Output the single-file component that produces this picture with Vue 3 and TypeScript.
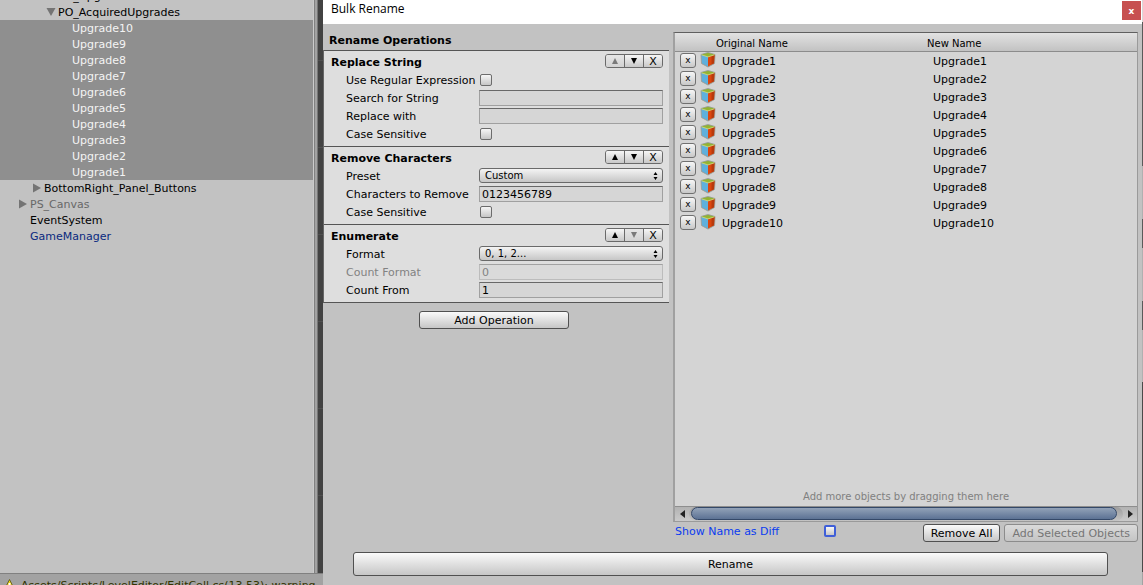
<script setup lang="ts">
import { reactive, ref } from 'vue'

interface TreeNode {
  name: string
  depth: number
  arrow?: 'open' | 'closed'
  tone?: 'selected' | 'muted' | 'prefab'
}

interface Field {
  id: string
  label: string
  kind: 'check' | 'text' | 'select'
  value?: string
  disabled?: boolean
}

interface Operation {
  title: string
  fields: Field[]
}

const count = 10

const tree: TreeNode[] = [
  { name: 'PO_UpgradesName', depth: 3 },
  { name: 'PO_AcquiredUpgrades', depth: 3, arrow: 'open' },
  ...Array.from({ length: count }, (_, i): TreeNode => ({
    name: `Upgrade${count - i}`,
    depth: 4,
    tone: 'selected',
  })),
  { name: 'BottomRight_Panel_Buttons', depth: 2, arrow: 'closed' },
  { name: 'PS_Canvas', depth: 1, arrow: 'closed', tone: 'muted' },
  { name: 'EventSystem', depth: 1 },
  { name: 'GameManager', depth: 1, tone: 'prefab' },
]

const operations = reactive<Operation[]>([
  {
    title: 'Replace String',
    fields: [
      { id: 'regex', label: 'Use Regular Expression', kind: 'check' },
      { id: 'search', label: 'Search for String', kind: 'text', value: '' },
      { id: 'replace', label: 'Replace with', kind: 'text', value: '' },
      { id: 'replace-case', label: 'Case Sensitive', kind: 'check' },
    ],
  },
  {
    title: 'Remove Characters',
    fields: [
      { id: 'preset', label: 'Preset', kind: 'select', value: 'Custom' },
      { id: 'characters', label: 'Characters to Remove', kind: 'text', value: '0123456789' },
      { id: 'remove-case', label: 'Case Sensitive', kind: 'check' },
    ],
  },
  {
    title: 'Enumerate',
    fields: [
      { id: 'format', label: 'Format', kind: 'select', value: '0, 1, 2...' },
      { id: 'count-format', label: 'Count Format', kind: 'text', value: '0', disabled: true },
      { id: 'count-from', label: 'Count From', kind: 'text', value: '1' },
    ],
  },
])

const objects = ref<string[]>(Array.from({ length: count }, (_, i) => `Upgrade${i + 1}`))

function move(index: number, by: number) {
  const [op] = operations.splice(index, 1)
  operations.splice(index + by, 0, op)
}
</script>

<template>
  <div class="screen">
    <aside class="editor">
      <div class="hierarchy">
        <div class="tree-pane">
          <ul class="tree">
            <li v-for="node in tree" :key="node.name" :class="['node', `depth-${node.depth}`, node.tone]">
              <span class="twisty">
                <svg v-if="node.arrow === 'open'" width="10" height="10" viewBox="0 0 10 10"><path d="M0.5 1h9L5 9z" /></svg>
                <svg v-else-if="node.arrow === 'closed'" width="10" height="10" viewBox="0 0 10 10"><path d="M1 0.5v9L9 5z" /></svg>
              </span>
              <span>{{ node.name }}</span>
            </li>
          </ul>
        </div>
        <div class="gutter"></div>
        <div class="backdrop"></div>
      </div>
      <footer class="status">
        <svg class="warn" width="13" height="13" viewBox="0 0 13 13">
          <path d="M6.500 0.500L12.500 12.500H0.500z" fill="#f4d80c" stroke="#6a6424" />
          <path d="M6.500 4v5" stroke="#fff" stroke-width="2" />
        </svg>
        <span>Assets/Scripts/LevelEditor/EditCell.cs(13,53): warning</span>
      </footer>
    </aside>

    <main class="dialog">
      <header class="titlebar">
        <h1>Bulk Rename</h1>
        <button class="close" type="button" aria-label="Close">x</button>
      </header>

      <div class="content">
        <section class="operations">
          <h2>Rename Operations</h2>
          <div class="op-list">
            <section v-for="(op, i) in operations" :key="op.title" class="op">
              <div class="op-head">
                <h3>{{ op.title }}</h3>
                <div class="op-tools">
                  <button type="button" aria-label="Move up" :disabled="i === 0" @click="move(i, -1)">
                    <svg width="6" height="6" viewBox="0 0 6 6"><path d="M3 0L6 6H0z" /></svg>
                  </button>
                  <button type="button" aria-label="Move down" :disabled="i === operations.length - 1" @click="move(i, 1)">
                    <svg width="6" height="6" viewBox="0 0 6 6"><path d="M3 6L6 0H0z" /></svg>
                  </button>
                  <button type="button" @click="operations.splice(i, 1)">X</button>
                </div>
              </div>
              <div v-for="field in op.fields" :key="field.id" class="field" :class="{ off: field.disabled }">
                <label :for="field.id">{{ field.label }}</label>
                <input v-if="field.kind === 'check'" :id="field.id" class="check" type="checkbox" />
                <input v-else-if="field.kind === 'text'" :id="field.id" v-model="field.value" class="text" type="text" :disabled="field.disabled" />
                <div v-else class="popup">
                  <select :id="field.id" v-model="field.value">
                    <option :value="field.value">{{ field.value }}</option>
                  </select>
                  <svg width="5" height="8" viewBox="0 0 5 8"><path d="M2.500 0L4.500 3H0.500zM2.500 8L4.500 5H0.500z" /></svg>
                </div>
              </div>
            </section>
          </div>
          <button class="btn add-op" type="button">Add Operation</button>
        </section>

        <section class="preview">
          <div class="list">
            <table>
              <colgroup>
                <col class="c-tools" />
                <col class="c-name" />
                <col />
              </colgroup>
              <thead>
                <tr>
                  <th></th>
                  <th>Original Name</th>
                  <th>New Name</th>
                </tr>
              </thead>
              <tbody>
                <tr v-for="(name, i) in objects" :key="name">
                  <td>
                    <div class="row-tools">
                      <button class="remove" type="button" :aria-label="`Remove ${name}`" @click="objects.splice(i, 1)">x</button>
                      <svg width="16" height="16" viewBox="0 0 16 16">
                        <path d="M8 0.500L15 2.500 14.500 11.500 8 15 1.500 11.500 1 2.500z" fill="#8a9298" stroke="#9fa39c" />
                        <path d="M1.500 2.800L8 4.800v9.700L2 11.200z" fill="#5fb0dc" />
                        <path d="M14.500 2.800L8 4.800v9.700l6-3.300z" fill="#dc460e" />
                        <path d="M11.500 4l3-1.200-0.500 8.400-2.500 1.400z" fill="#b93a0c" />
                        <path d="M1.500 2.600L8 0.900l6.500 1.700L8 4.800z" fill="#93b431" />
                        <path d="M1.500 2.800L8 4.900l6.500-2.100" fill="none" stroke="#cfd978" stroke-width="0.900" />
                      </svg>
                    </div>
                  </td>
                  <td>{{ name }}</td>
                  <td>{{ name }}</td>
                </tr>
              </tbody>
            </table>
            <p class="hint">Add more objects by dragging them here</p>
            <div class="scrollbar">
              <button type="button" aria-label="Scroll left">
                <svg width="5" height="8" viewBox="0 0 5 8"><path d="M5 0v8L0 4z" /></svg>
              </button>
              <div class="track"><div class="thumb"></div></div>
              <button type="button" aria-label="Scroll right">
                <svg width="5" height="8" viewBox="0 0 5 8"><path d="M0 0v8l5-4z" /></svg>
              </button>
            </div>
          </div>
          <div class="actions">
            <label for="diff">Show Name as Diff</label>
            <input id="diff" class="check focus" type="checkbox" />
            <div class="buttons">
              <button class="btn" type="button" @click="objects = []">Remove All</button>
              <button class="btn" type="button" disabled>Add Selected Objects</button>
            </div>
          </div>
        </section>
      </div>

      <button class="btn rename" type="button">Rename</button>
    </main>
    <div class="edge"></div>
  </div>
</template>

<style>
body {
  margin: 0;
}
</style>

<style scoped>
* {
  box-sizing: border-box;
}

.screen {
  display: flex;
  height: 100vh;
  overflow: hidden;
  background: #c2c2c2;
  color: #000;
  font: 11px/16px "DejaVu Sans", Verdana, sans-serif;
}

button,
input,
select {
  margin: 0;
  padding: 0;
  border: 0;
  color: inherit;
  font: inherit;
}

h1,
h2,
h3,
p,
ul {
  margin: 0;
  padding: 0;
}

svg {
  display: block;
  flex: none;
  fill: currentColor;
}

/* hierarchy */
.editor {
  display: flex;
  flex: 0 0 323px;
  flex-direction: column;
  overflow: hidden;
}

.hierarchy {
  display: flex;
  flex: 1;
  min-height: 0;
}

.tree-pane {
  flex: 1;
  overflow: hidden;
  border-right: 1px solid #cbcbcb;
}

.tree {
  margin-top: -12px;
  list-style: none;
}

.node {
  display: flex;
  align-items: flex-start;
  height: 16px;
  padding-top: 1px;
  white-space: nowrap;
}

.depth-1 { padding-left: 18px; }
.depth-2 { padding-left: 32px; }
.depth-3 { padding-left: 46px; }
.depth-4 { padding-left: 60px; }

.twisty {
  flex: 0 0 12px;
  padding-top: 2px;
  color: #747474;
}

.selected {
  background: #8f8f8f;
  color: #f4f4f4;
}

.muted { color: #686868; }
.prefab { color: #0a2a80; }

.gutter {
  flex: 0 0 4px;
  border-left: 1px solid #808080;
  border-right: 1px solid #767676;
  background: #a2a2a2;
}

.backdrop {
  flex: 0 0 5px;
  background: repeating-linear-gradient(#424242 0, #424242 86px, #505050 86px, #505050 87px);
  background-position: 0 -26px;
}

.status {
  display: flex;
  flex: none;
  align-items: flex-start;
  gap: 5px;
  height: 12px;
  overflow: hidden;
  padding: 5px 0 0 3px;
  border-top: 1px solid #808080;
  background: #a2a2a2;
  color: #333300;
  line-height: 14px;
  white-space: nowrap;
}

/* dialog */
.dialog {
  display: flex;
  flex: 1;
  flex-direction: column;
  min-width: 0;
}

.edge {
  flex: 0 0 1px;
  background: linear-gradient(
    #d8d8d8 22px,
    #5a5a5a 22px 166px,
    #b0b0b0 166px 219px,
    #5a5a5a 219px 248px,
    #b0b0b0 248px 301px,
    #5a5a5a 301px 330px,
    #b0b0b0 330px 382px,
    #4a4a4a 382px 572px,
    #a2a2a2 572px
  );
}

.titlebar {
  display: flex;
  flex: 0 0 24px;
  align-items: flex-start;
  justify-content: space-between;
  padding: 1px 1px 0 8px;
  background: #fff;
}

.titlebar h1 {
  font: 12px/16px "Open Sans", "Noto Sans", sans-serif;
}

.close {
  width: 19px;
  height: 19px;
  background: #c75050;
  color: #fff;
  font-size: 9px;
  font-weight: bold;
  line-height: 18px;
}

.content {
  display: flex;
  flex: 1;
  gap: 4px;
  min-height: 0;
}

.operations {
  display: flex;
  flex: 0 0 346px;
  flex-direction: column;
}

.operations h2 {
  height: 26px;
  padding: 9px 0 0 6px;
  font-size: 11px;
  line-height: 16px;
}

.op-list {
  border-bottom: 1px solid #555;
  border-left: 1px solid #666;
  background: #dedede;
}

.op {
  padding: 2px 6px 3px 7px;
  border-top: 1px solid #555;
}

.op-head {
  display: flex;
  justify-content: space-between;
  height: 18px;
}

.op-head h3 {
  font-size: 11px;
  line-height: 20px;
}

.op-tools {
  display: flex;
  height: 14px;
  margin-top: 1px;
  overflow: hidden;
  border: 1px solid #6a6a6a;
  border-radius: 3px;
}

.op-tools button {
  display: grid;
  place-items: center;
  width: 19px;
  background: linear-gradient(#f6f6f6, #c8c8c8);
  line-height: 14px;
}

.op-tools button:first-child {
  width: 18px;
}

.op-tools button + button {
  border-left: 1px solid #6a6a6a;
}

.op-tools button:disabled {
  background: linear-gradient(#e6e6e6, #d2d2d2);
  color: #7a7a7a;
}

.field {
  display: flex;
  align-items: center;
  height: 18px;
  padding-left: 15px;
}

.field label {
  flex: 0 0 133px;
  overflow: hidden;
  padding-top: 1px;
  line-height: 18px;
  white-space: nowrap;
}

.field.off label {
  color: #828282;
}

.text {
  flex: 1;
  min-width: 0;
  height: 16px;
  padding: 0 2px;
  border: 1px solid #a0a0a0;
  border-top-color: #686868;
  background: #d6d6d6;
  line-height: 14px;
}

.text:disabled {
  border-color: #bcbcbc;
  border-top-color: #a2a2a2;
  background: #dadada;
  color: #828282;
}

.check {
  flex: none;
  width: 12px;
  height: 12px;
  margin-left: 1px;
  appearance: none;
  border: 1px solid #6c6c6c;
  border-radius: 2px;
  background: linear-gradient(#f6f6f6, #c6c6c6);
}

.check:checked {
  background: #555;
}

.check.focus {
  border: 2px solid #3f5fd8;
}

.popup {
  display: flex;
  flex: 1;
  align-items: center;
  align-self: flex-start;
  height: 15px;
  margin-top: 1px;
  padding-right: 4px;
  border: 1px solid #6a6a6a;
  border-radius: 3px;
  background: linear-gradient(#f4f4f4, #c6c6c6);
}

.popup select {
  flex: 1;
  height: 13px;
  padding-left: 5px;
  appearance: none;
  background: none;
  font-size: 10px;
  line-height: 13px;
}

.btn {
  height: 18px;
  padding-top: 1px;
  border: 1px solid #505050;
  border-radius: 3px;
  background: linear-gradient(#fafafa, #c6c6c6);
  line-height: 15px;
  white-space: nowrap;
}

.btn:disabled {
  border-color: #8c8c8c;
  background: linear-gradient(#dadada, #c4c4c4);
  color: #767676;
}

.add-op {
  align-self: center;
  width: 150px;
  margin: 8px 0 0 -4px;
}

/* preview list */
.preview {
  display: flex;
  flex: 1;
  flex-direction: column;
  min-width: 0;
  padding: 8px 4px 0 0;
}

.list {
  display: flex;
  flex: 1;
  flex-direction: column;
  border: 1px solid #9a9a9a;
  border-top-color: #606060;
  border-left: 2px solid #a0a0a0;
  background: #d4d4d4;
}

table {
  width: 100%;
  table-layout: fixed;
  border-collapse: collapse;
}

.c-tools { width: 41px; }
.c-name { width: 211px; }

thead {
  background: linear-gradient(#e2e2e2, #c2c2c2);
}

th {
  height: 18px;
  padding: 4px 0 0;
  border-bottom: 1px solid #8c8c8c;
  font-size: 10px;
  font-weight: normal;
  line-height: 13px;
  text-align: left;
}

td {
  height: 18px;
  padding: 2px 0 0 6px;
  line-height: 16px;
}

td:first-child {
  padding: 0 0 0 5px;
  vertical-align: top;
}

.row-tools {
  display: flex;
  align-items: flex-start;
  gap: 4px;
  height: 16px;
}

.remove {
  width: 16px;
  height: 15px;
  margin-top: 1px;
  border: 1px solid #707070;
  border-radius: 3px;
  background: linear-gradient(#f6f6f6, #c8c8c8);
  font-size: 9px;
  line-height: 13px;
}

.hint {
  margin-top: auto;
  padding-bottom: 1px;
  color: #808080;
  font-size: 10px;
  text-align: center;
}

.scrollbar {
  display: flex;
  height: 15px;
  border-top: 1px solid #8e8e8e;
  background: linear-gradient(#b2b2b2, #cacaca);
}

.scrollbar button {
  display: grid;
  place-items: center;
  width: 14px;
  background: none;
  color: #222;
}

.track {
  flex: 1;
  padding: 0 6px 0 2px;
  border-radius: 7px;
  background: linear-gradient(#9c9c9c, #c4c4c4);
}

.thumb {
  height: 13px;
  border: 1px solid #344868;
  border-radius: 7px;
  background: linear-gradient(#92a2b8, #5c7294);
}

.actions {
  display: flex;
  align-items: flex-start;
  padding: 2px 0 0 2px;
}

.actions label {
  flex: 0 0 148px;
  color: #0a3cf0;
}

.actions .check {
  margin-top: 1px;
}

.buttons {
  display: flex;
  gap: 4px;
  margin-left: auto;
}

.buttons .btn {
  padding: 1px 7px 0;
}

.rename {
  flex: none;
  height: 24px;
  margin: 10px 34px 9px 30px;
  line-height: 21px;
}
</style>
